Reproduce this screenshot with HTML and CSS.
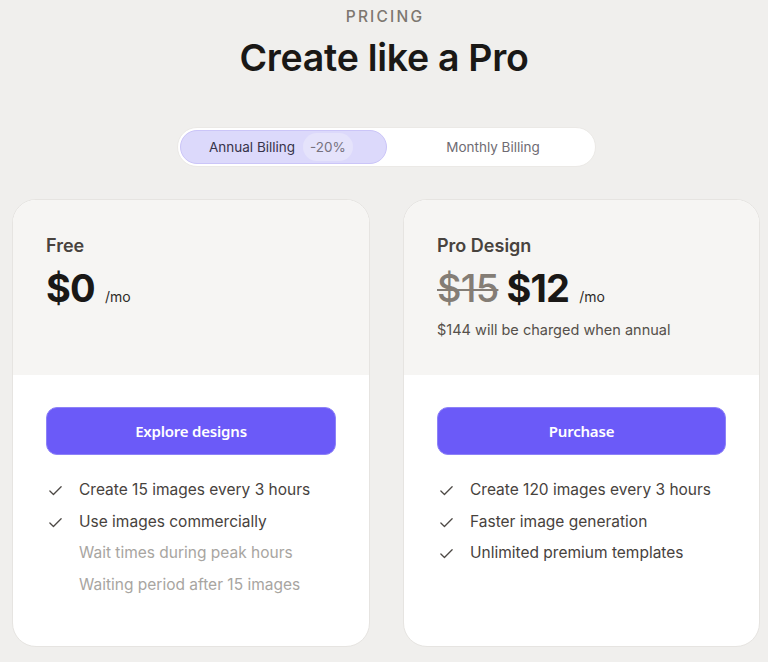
FILE: index.html
```html
<!DOCTYPE html>
<html lang="en">
<head>
<meta charset="utf-8">
<title>Pricing</title>
<link rel="stylesheet" href="styles.css">
</head>
<body>
<main class="page">
  <header class="intro">
    <p class="eyebrow">PRICING</p>
    <h1 class="title">Create like a Pro</h1>
  </header>

  <div class="toggle">
    <button class="toggle-opt active">Annual Billing <span class="badge">-20%</span></button>
    <button class="toggle-opt">Monthly Billing</button>
  </div>

  <section class="plans">
    <article class="card">
      <div class="card-head">
        <h2 class="plan-name">Free</h2>
        <div class="price-row"><span class="price">$0</span><span class="per">/mo</span></div>
      </div>
      <div class="card-body">
        <button class="cta">Explore designs</button>
        <ul class="features">
          <li class="feat"><svg class="check" viewBox="0 0 16 16"><path d="M2 8.6l3.8 3.6L14 4"/></svg>Create 15 images every 3 hours</li>
          <li class="feat"><svg class="check" viewBox="0 0 16 16"><path d="M2 8.6l3.8 3.6L14 4"/></svg>Use images commercially</li>
          <li class="feat muted">Wait times during peak hours</li>
          <li class="feat muted">Waiting period after 15 images</li>
        </ul>
      </div>
    </article>

    <article class="card">
      <div class="card-head">
        <h2 class="plan-name">Pro Design</h2>
        <div class="price-row"><span class="price old">$15</span><span class="price">$12</span><span class="per">/mo</span></div>
        <p class="note">$144 will be charged when annual</p>
      </div>
      <div class="card-body">
        <button class="cta">Purchase</button>
        <ul class="features">
          <li class="feat"><svg class="check" viewBox="0 0 16 16"><path d="M2 8.6l3.8 3.6L14 4"/></svg>Create 120 images every 3 hours</li>
          <li class="feat"><svg class="check" viewBox="0 0 16 16"><path d="M2 8.6l3.8 3.6L14 4"/></svg>Faster image generation</li>
          <li class="feat"><svg class="check" viewBox="0 0 16 16"><path d="M2 8.6l3.8 3.6L14 4"/></svg>Unlimited premium templates</li>
        </ul>
      </div>
    </article>
  </section>
</main>
</body>
</html>
```

FILE: styles.css
```css
* { box-sizing: border-box; }
html, body { margin: 0; padding: 0; }
body {
  background: #f0efed;
  font-family: Inter, "Noto Sans", sans-serif;
  color: #1c1a18;
  width: 768px;
  height: 662px;
  overflow: hidden;
}
.page {
  display: flex;
  flex-direction: column;
  align-items: center;
}
.intro {
  display: flex;
  flex-direction: column;
  align-items: center;
}
.eyebrow {
  margin: 7px 0 0;
  font-size: 15.5px;
  line-height: 20px;
  letter-spacing: 2.2px;
  color: #7d7770;
  font-weight: 500;
  padding-left: 2px;
}
.title {
  margin: 8px 0 0;
  font-size: 37.5px;
  line-height: 46px;
  font-weight: 600;
  letter-spacing: -0.3px;
  color: #1a1816;
}
.toggle {
  margin-top: 46px;
  margin-left: 5px;
  width: 419px;
  height: 40px;
  background: #ffffff;
  border-radius: 20px;
  padding: 2px;
  display: flex;
  align-items: stretch;
  border: 1px solid #ebe9e6;
}
.toggle-opt {
  flex: 1;
  border: 1px solid transparent;
  background: transparent;
  border-radius: 17px;
  font-family: Inter, sans-serif;
  font-size: 13.5px;
  color: #6f6b73;
  display: flex;
  align-items: center;
  justify-content: center;
  gap: 8px;
  padding: 0 0 0 6px;
}
.toggle-opt.active {
  flex: 0 0 207px;
  background: #dcd9fb;
  border-color: #cbc5f8;
  color: #37334a;
  justify-content: flex-start;
  padding-left: 28px;
}
.badge {
  background: #e5e3fb;
  color: #76727e;
  border-radius: 14px;
  padding: 5px 7px;
  line-height: 18px;
}
.plans {
  margin-top: 32px;
  align-self: stretch;
  padding: 0 8px 0 12px;
  display: grid;
  grid-template-columns: 358px 357px;
  column-gap: 33px;
}
.card {
  background: #ffffff;
  border: 1px solid #e6e4e1;
  border-radius: 24px;
  overflow: hidden;
  height: 448px;
  display: flex;
  flex-direction: column;
}
.card-head {
  background: #f6f5f3;
  height: 175px;
  padding: 35px 33px 0;
}
.plan-name {
  margin: 0;
  font-size: 18px;
  line-height: 22px;
  font-weight: 600;
  color: #48433e;
}
.price-row {
  margin-top: 9px;
  display: flex;
  align-items: baseline;
  gap: 8px;
}
.price {
  font-size: 38px;
  line-height: 44px;
  font-weight: 700;
  letter-spacing: -0.8px;
  color: #1a1816;
}
.price.old {
  color: #847d75;
  font-weight: 500;
  text-decoration: line-through;
  text-decoration-thickness: 2px;
}
.per {
  font-size: 14px;
  color: #2e2b28;
  margin-left: 2px;
}
.note {
  margin: 11px 0 0;
  font-size: 14.5px;
  line-height: 18px;
  color: #55504a;
}
.card-body {
  padding: 32px 33px 0;
}
.cta {
  display: block;
  width: 100%;
  height: 48px;
  border: 1px solid #8d82f7;
  border-radius: 11px;
  background: #6b5af8;
  color: #ffffff;
  font-family: "Noto Sans", sans-serif;
  font-size: 15px;
  font-weight: 600;
  letter-spacing: -0.2px;
}
.features {
  list-style: none;
  margin: 19px 0 0;
  padding: 0;
}
.feat {
  display: flex;
  align-items: center;
  height: 31.6px;
  font-size: 15.5px;
  color: #47423d;
  padding-left: 33px;
  position: relative;
}
.feat .check {
  position: absolute;
  left: 2px;
  top: 9px;
  width: 15px;
  height: 15px;
  fill: none;
  stroke: #4e4a46;
  stroke-width: 1.4;
  stroke-linecap: round;
  stroke-linejoin: round;
}
.feat.muted {
  color: #a8a5a1;
}
```
